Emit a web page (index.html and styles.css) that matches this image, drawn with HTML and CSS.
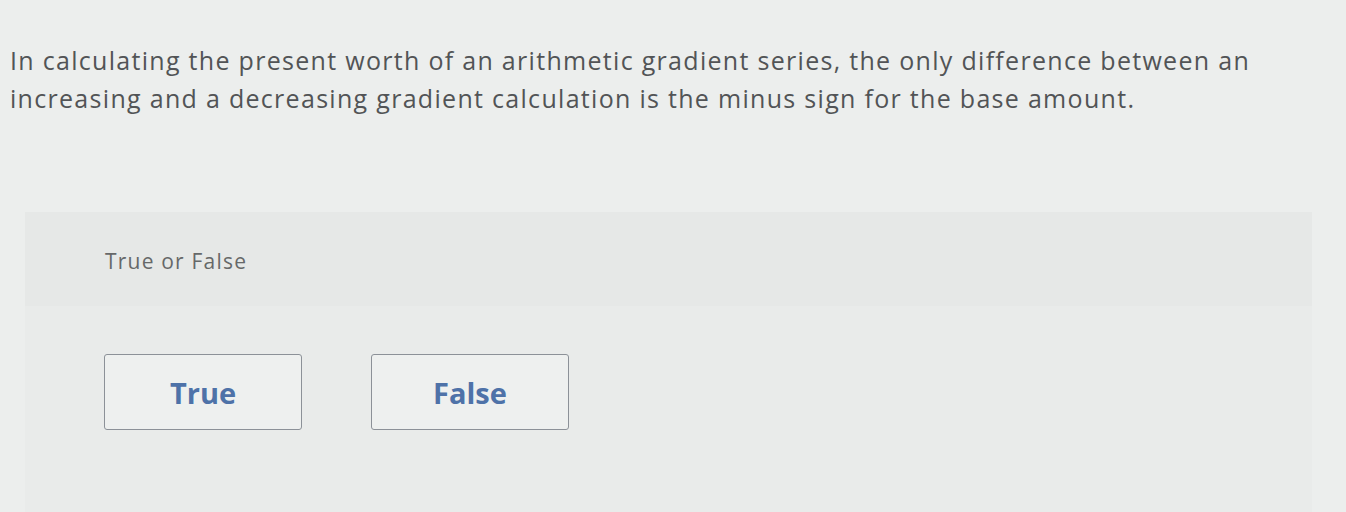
FILE: index.html
```html
<!DOCTYPE html>
<html lang="en">
<head>
    <meta charset="UTF-8">
    <title>True or False</title>
    <link rel="stylesheet" href="styles.css">
</head>
<body>
    <p class="prompt">In calculating the present worth of an arithmetic gradient series, the only difference between an increasing and a decreasing gradient calculation is the minus sign for the base amount.</p>
    <div class="answer-panel">
        <div class="panel-head">
            <span class="kind">True or False</span>
        </div>
        <div class="choices">
            <button class="choice" type="button">True</button>
            <button class="choice" type="button">False</button>
        </div>
    </div>
</body>
</html>
```

FILE: styles.css
```css
body {
  margin: 0;
  background-color: #eceeed;
  font-family: 'Open Sans', Lato, Arial, sans-serif;
  color: #5a5c5e;
  overflow: hidden;
}
.prompt {
  margin: 0;
  width: 1300px;
  padding: 41px 0 0 10px;
  font-size: 25px;
  line-height: 38px;
  letter-spacing: 1.3px;
  color: #525456;
}
.answer-panel {
  margin: 95px 34px 0 25px;
  background-color: #e9ebea;
  height: 320px;
}
.panel-head {
  background-color: #e6e8e7;
  padding: 35px 0 0 80px;
  height: 59px;
}
.kind {
  font-size: 21px;
  letter-spacing: 1.2px;
  color: #666869;
}
.choices {
  display: flex;
  gap: 69px;
  padding: 48px 0 0 79px;
}
.choice {
  width: 198px;
  height: 76px;
  background-color: #eef0ef;
  border: 1.5px solid #8c9198;
  border-radius: 3px;
  font-family: 'Open Sans', Lato, Arial, sans-serif;
  font-size: 29px;
  font-weight: 700;
  color: #4e72a8;
  cursor: pointer;
}
```
